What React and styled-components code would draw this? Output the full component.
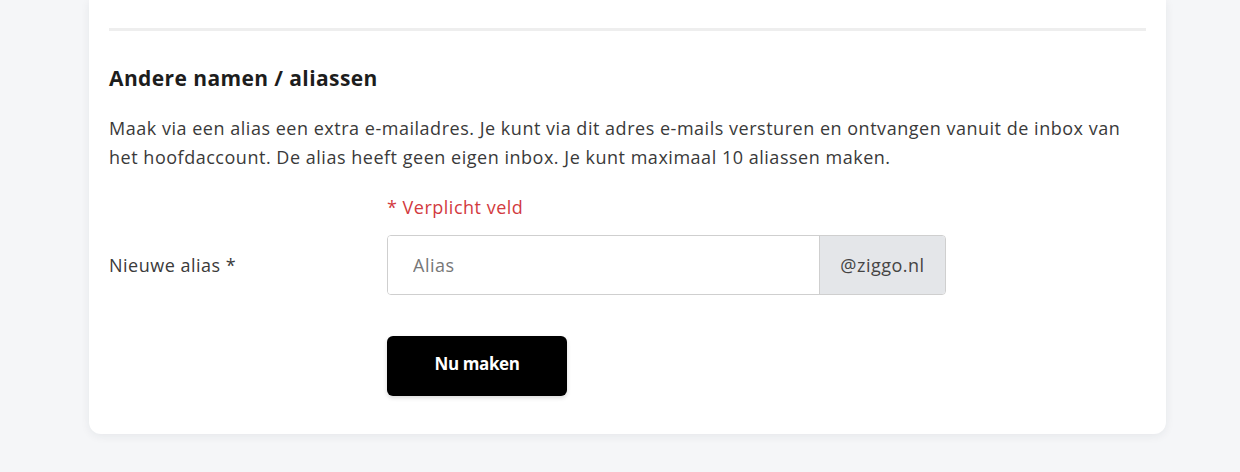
import React, { useState } from 'react';
import styled, { createGlobalStyle } from 'styled-components';

const GlobalStyle = createGlobalStyle`
  * { box-sizing: border-box; }
  body {
    margin: 0;
    background: #f5f6f8;
    font-family: "Open Sans", "Liberation Sans", sans-serif;
    color: #333;
  }
`;

const Page = styled.div`
  padding: 0 74px 38px 89px;
  min-height: 472px;
`;

const Card = styled.section`
  width: 1077px;
  background: #fff;
  border-radius: 0 0 12px 12px;
  box-shadow: 0 2px 10px rgba(30, 40, 60, 0.07);
  padding: 28px 20px 38px;
`;

const Divider = styled.hr`
  margin: 0;
  border: none;
  height: 3px;
  background: #eeeeee;
`;

const Title = styled.h2`
  margin: 35px 0 0;
  font-size: 21px;
  line-height: 24px;
  font-weight: 700;
  color: #1d1d1d;
  letter-spacing: 0.4px;
`;

const Intro = styled.p`
  margin: 24px 0 0;
  font-size: 18px;
  line-height: 29px;
  letter-spacing: 0.52px;
  color: #3a3a3a;
`;

const FormGrid = styled.form`
  margin-top: 23px;
  display: grid;
  grid-template-columns: 278px 559px;
  font-size: 18px;
  letter-spacing: 0.5px;
`;

const Required = styled.div`
  grid-column: 2;
  line-height: 24px;
  color: #d23a40;
  margin-bottom: 16px;
`;

const Label = styled.label`
  grid-column: 1;
  align-self: center;
  color: #3a3a3a;
`;

const InputGroup = styled.div`
  grid-column: 2;
  display: flex;
  height: 60px;
  border: 1px solid #cfcfcf;
  border-radius: 4px;
  overflow: hidden;
`;

const TextInput = styled.input`
  flex: 1;
  min-width: 0;
  border: none;
  outline: none;
  padding: 0 25px;
  font-family: inherit;
  font-size: 18px;
  letter-spacing: 0.5px;
  color: #333;

  &::placeholder {
    color: #777;
  }
`;

const Addon = styled.span`
  display: flex;
  align-items: center;
  width: 126px;
  justify-content: center;
  border-left: 1px solid #cfcfcf;
  background: #e4e6e9;
  color: #444;
`;

const SubmitButton = styled.button`
  grid-column: 2;
  margin-top: 41px;
  width: 180px;
  height: 60px;
  padding: 0 0 6px;
  border: none;
  border-radius: 6px;
  background: #000;
  color: #fff;
  font-family: "Open Sans", "Liberation Sans", sans-serif;
  font-weight: 700;
  font-size: 17px;
  letter-spacing: -0.4px;
  box-shadow: 0 2px 4px rgba(0, 0, 0, 0.15);
  cursor: pointer;
`;

export default function App() {
  const [alias, setAlias] = useState('');

  return (
    <>
      <GlobalStyle />
      <Page>
        <Card>
          <Divider />
          <Title>Andere namen / aliassen</Title>
          <Intro>
            Maak via een alias een extra e-mailadres. Je kunt via dit adres e-mails versturen en ontvangen vanuit de inbox van
            het hoofdaccount. De alias heeft geen eigen inbox. Je kunt maximaal 10 aliassen maken.
          </Intro>
          <FormGrid onSubmit={e => e.preventDefault()}>
            <Required>* Verplicht veld</Required>
            <Label htmlFor="alias">Nieuwe alias *</Label>
            <InputGroup>
              <TextInput
                id="alias"
                type="text"
                placeholder="Alias"
                value={alias}
                onChange={e => setAlias(e.target.value)}
              />
              <Addon>@ziggo.nl</Addon>
            </InputGroup>
            <SubmitButton type="submit">Nu maken</SubmitButton>
          </FormGrid>
        </Card>
      </Page>
    </>
  );
}
